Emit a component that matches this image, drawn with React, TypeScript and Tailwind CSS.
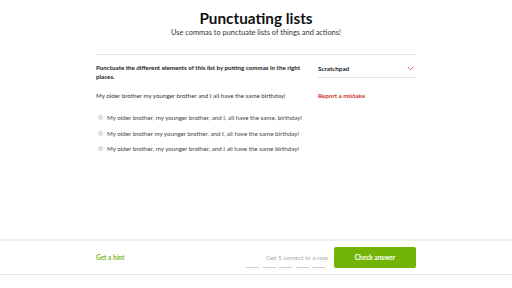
import React from "react";

const C = () => <span className="text-[#d92916]">,</span>;

function Option({ children }: { children: React.ReactNode }) {
  return (
    <div className="flex items-center h-[15.5px] whitespace-nowrap">
      <span className="shrink-0 ml-[2px] mr-[4px] w-[5px] h-[5px] rounded-full bg-[#e6e6e6] border border-[#cfcfcf]" />
      <span className="text-[6.2px] text-[#444]">{children}</span>
    </div>
  );
}

export default function App() {
  return (
    <div
      className="w-[512px] h-[288px] bg-white flex flex-col"
      style={{ fontFamily: "Lato, 'Open Sans', sans-serif" }}
    >
      <div className="flex flex-col items-center pt-[8px]">
        <h1 className="text-[15.3px] leading-[20px] font-bold text-[#111]">Punctuating lists</h1>
        <p className="text-[7.4px] leading-[10px] text-[#333] mt-[0px]">
          Use commas to punctuate lists of things and actions!
        </p>
      </div>
      <div className="mx-[96px] mt-[16px] border-t border-[#e3e3e3]" />
      <div className="mx-[96px] flex">
        <div className="w-[212px] pt-[8px]">
          <p className="text-[6.2px] leading-[9px] font-bold text-[#222] whitespace-nowrap">
            Punctuate the different elements of this list by putting commas in the right
            <br />
            places.
          </p>
          <p className="text-[6.2px] leading-[9px] text-[#333] mt-[10px] whitespace-nowrap">
            My older brother my younger brother and I all have the same birthday!
          </p>
          <div className="mt-[10px] flex flex-col">
            <Option>
              My older brother<C /> my younger brother<C /> and I<C /> all have the same<C /> birthday!
            </Option>
            <Option>
              My older brother my younger brother<C /> and I<C /> all have the same birthday!
            </Option>
            <Option>
              My older brother<C /> my younger brother<C /> and I all have the same birthday!
            </Option>
          </div>
        </div>
        <div className="ml-[10px] flex-1 pt-[9px]">
          <div className="flex items-center justify-between border-b border-[#e3e3e3] pb-[4px]">
            <span className="text-[6.3px] font-bold text-[#222]">Scratchpad</span>
            <svg width="7" height="5" viewBox="0 0 7 5" className="mr-[2px]">
              <path d="M0.8 1 L3.5 3.7 L6.2 1" fill="none" stroke="#e06050" strokeWidth="1" />
            </svg>
          </div>
          <p className="mt-[13px] text-[6.3px] font-bold text-[#c8321e]">Report a mistake</p>
        </div>
      </div>
      <div className="flex-1" />
      <div className="h-[36px] mb-[13px] border-t-2 border-[#eeeeee] border-b border-b-[#e5e5e5] flex items-center px-[96px]">
        <span className="text-[6.5px] font-bold text-[#7ab730]">Get a hint</span>
        <div className="flex-1" />
        <div className="relative w-[82px] h-[22px] mr-[6px]">
          <span className="absolute right-[0px] top-[6px] text-[6.5px] text-[#aaa] whitespace-nowrap">Get 5 correct in a row</span>
          <div className="absolute left-0 bottom-[1px] flex gap-[3.5px]">
            <span className="w-[13px] h-px bg-[#ccc]" />
            <span className="w-[13px] h-px bg-[#ccc]" />
            <span className="w-[13px] h-px bg-[#ccc]" />
            <span className="w-[13px] h-px bg-[#ccc]" />
            <span className="w-[13px] h-px bg-[#ccc]" />
          </div>
        </div>
        <button className="w-[82px] h-[21px] rounded-[2px] bg-[#71b307] text-white text-[6.5px] font-bold">
          Check answer
        </button>
      </div>
    </div>
  );
}
